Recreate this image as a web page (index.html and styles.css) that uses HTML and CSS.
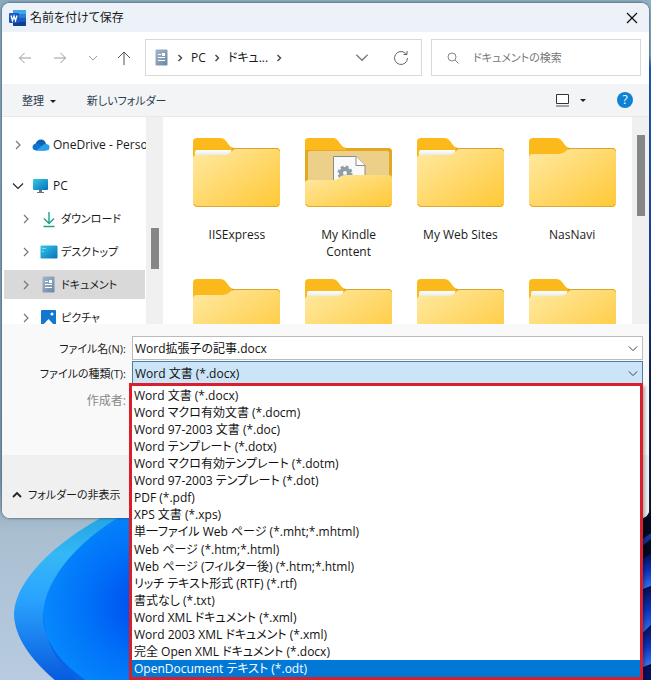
FILE: index.html
```html
<!DOCTYPE html>
<html lang="ja">

<head>
	<meta charset="utf-8">
	<meta name="viewport" content="width=device-width, initial-scale=1">
	<title>名前を付けて保存</title>
	<link rel="stylesheet" href="styles.css">
</head>

<body>
	<!-- wallpaper -->
	<svg class="wallpaper" viewBox="0 0 651 680" preserveAspectRatio="none" aria-hidden="true">
		<defs>
			<linearGradient id="sky" x1="0" y1="0" x2="0" y2="1">
				<stop offset="0" stop-color="#8aaabd" />
				<stop offset=".7" stop-color="#7e97ac" />
				<stop offset=".78" stop-color="#a9bfd0" />
				<stop offset="1" stop-color="#b8cbe0" />
			</linearGradient>
			<linearGradient id="petal" x1="0" y1="0" x2="0" y2="1">
				<stop offset="0" stop-color="#1b9bdc" />
				<stop offset=".3" stop-color="#35b8f5" />
				<stop offset=".55" stop-color="#2aa2ff" />
				<stop offset="1" stop-color="#0759dd" />
			</linearGradient>
			<radialGradient id="inner" gradientUnits="userSpaceOnUse" cx="145" cy="605" r="110">
				<stop offset="0" stop-color="#0049ee" />
				<stop offset=".5" stop-color="#0070f8" />
				<stop offset="1" stop-color="#078cfd" />
			</radialGradient>
			<linearGradient id="edge" x1="0" y1="0" x2="0" y2="1">
				<stop offset="0" stop-color="#8fb0c4" />
				<stop offset=".08" stop-color="#7fa8c6" />
				<stop offset=".1" stop-color="#1559c8" />
				<stop offset=".4" stop-color="#0b3fae" />
				<stop offset=".55" stop-color="#06174c" />
				<stop offset=".77" stop-color="#02081f" />
			</linearGradient>
			<linearGradient id="fold" x1="0" y1="0" x2="0" y2="1">
				<stop offset="0" stop-color="#030c4c" />
				<stop offset=".5" stop-color="#0a35c0" />
				<stop offset="1" stop-color="#3b7cf8" />
			</linearGradient>
		</defs>
		<rect width="651" height="680" fill="url(#sky)" />
		<path d="M140 500C88 520 48 550 28 578C18 592 14 604 14 615C15 638 31 660 57 682H140Z" fill="url(#petal)" />
		<path d="M140 506C88 530 43 576 43 616C43 640 58 662 88 682H140Z" fill="url(#inner)" />
		<path d="M43 612C43 640 58 662 88 682H78C54 660 45 640 43 612Z" fill="#0863e6" />
		<rect x="641" width="10" height="680" fill="url(#edge)" />
		<path d="M641 540L651 533V539L641 547Z" fill="#14338f" />
		<path d="M641 560L651 553V586L641 590Z" fill="url(#fold)" />
		<path d="M641 590L651 586V625L641 635Z" fill="url(#fold)" />
		<path d="M641 635L651 625V664L641 668Z" fill="url(#fold)" />
		<path d="M641 668L651 666V680H641Z" fill="#03105c" />
	</svg>

	<!-- shared icons -->
	<svg width="0" height="0" class="sprites" aria-hidden="true">
		<defs>
			<linearGradient id="front" x1="0" y1="0" x2="1" y2="1">
				<stop offset="0" stop-color="#ffe9a2" />
				<stop offset="1" stop-color="#ffc835" />
			</linearGradient>
			<linearGradient id="paper" x1="0" y1="0" x2="0" y2="1">
				<stop offset="0" stop-color="#fff" />
				<stop offset="1" stop-color="#dcdcd6" />
			</linearGradient>
			<linearGradient id="docfill" x1="0" y1="0" x2="1" y2="1">
				<stop offset="0" stop-color="#a3b7ca" />
				<stop offset="1" stop-color="#6c87a3" />
			</linearGradient>
			<linearGradient id="screen" x1="0" y1="0" x2="1" y2="1">
				<stop offset="0" stop-color="#35c9e6" />
				<stop offset="1" stop-color="#0670bd" />
			</linearGradient>
			<symbol id="doc" viewBox="0 0 14 17">
				<rect x=".5" y=".5" width="12" height="16" rx="1" fill="url(#docfill)" />
				<path d="M3 5.500h3M3 8.500h7M3 11.500h7" stroke="#fff" />
				<rect x="7" y="4" width="3" height="3" fill="#fff" />
			</symbol>
			<symbol id="right" viewBox="0 0 8 10">
				<path d="M2 1l4 4-4 4" fill="none" stroke="currentColor" stroke-width="1.200" />
			</symbol>
			<symbol id="right-small" viewBox="0 0 8 10">
				<path d="M2.500 2l3 3-3 3" fill="none" stroke="currentColor" stroke-width="1.400" />
			</symbol>
			<symbol id="down" viewBox="0 0 12 8">
				<path d="M1 1.500l5 5 5-5" fill="none" stroke="currentColor" stroke-width="1.100" />
			</symbol>
			<!-- folder with a sheet of paper inside -->
			<symbol id="folder" viewBox="0 0 87 69">
				<path d="M0 18V4Q0 0 4 0H27Q31 0 33 3L36 7Q38 10 41 10H83Q87 10 87 14V40H0Z" fill="#fbb91b" />
				<path d="M39 10H83Q87 10 87 14V20H39Z" fill="#d9a52c" />
				<path d="M2 20V14Q2 12 4 12H38V20Z" fill="url(#paper)" />
				<path d="M0 21Q0 17 4 17H32Q35 17 37 15L39 13Q40 11 43 11H83Q87 11 87 15V65Q87 69 83 69H4Q0 69 0 65Z" fill="url(#front)" />
				<path d="M1 66Q2 68.500 4 68.500H83Q85 68.500 86 66" fill="none" stroke="#dca932" />
			</symbol>
			<!-- empty folder -->
			<symbol id="folder-empty" viewBox="0 0 87 69">
				<path d="M0 22V4Q0 0 4 0H27Q31 0 33 3L36 7Q38 10 41 10H83Q87 10 87 14V40H0Z" fill="#fbb91b" />
				<path d="M39 10H83Q87 10 87 14V20H39Z" fill="#d9a52c" />
				<path d="M0 20Q0 16 4 16H30Q34 16 37 13L38 12Q40 11 43 11H83Q87 11 87 15V65Q87 69 83 69H4Q0 69 0 65Z" fill="url(#front)" />
				<path d="M1 66Q2 68.500 4 68.500H83Q85 68.500 86 66" fill="none" stroke="#dca932" />
			</symbol>
			<!-- open folder with a settings file -->
			<symbol id="folder-open" viewBox="0 0 87 69">
				<path d="M0 46V4Q0 0 4 0H27Q31 0 33 3L36 7Q38 10 41 10H83Q87 10 87 14V42H0Z" fill="#fbb91b" />
				<path d="M0 46V12Q0 10 3 10H83Q87 10 87 14V42Z" fill="#e3a822" />
				<path d="M0 12V4Q0 0 4 0H27Q31 0 33 3L36 7Q38 10 41 10V12Z" fill="#fbb91b" />
				<path d="M3 44V15Q3 13 5 13H82Q84 13 84 15V44Z" fill="#ecd08a" />
				<path d="M28.500 44V18.500H51L60 27.500V44Z" fill="#fafafa" stroke="#8c8c8c" />
				<path d="M51 18.500V27.500H60" fill="#fff" stroke="#8c8c8c" />
				<circle cx="40" cy="35" r="4" fill="none" stroke="#8f9caa" stroke-width="4" />
				<circle cx="40" cy="35" r="6" fill="none" stroke="#8f9caa" stroke-width="3" stroke-dasharray="2.700 2" />
				<path d="M0 45Q0 42 4 42H29Q32 42 34 40L36 38Q38 37 41 37H83Q87 37 87 40V65Q87 69 83 69H4Q0 69 0 65Z" fill="url(#front)" />
				<path d="M1 66Q2 68.500 4 68.500H83Q85 68.500 86 66" fill="none" stroke="#dca932" />
			</symbol>
		</defs>
	</svg>

	<main class="dialog">
		<header class="titlebar">
			<svg width="17" height="16" viewBox="0 0 17 16" aria-hidden="true">
				<rect x="4" width="13" height="16" rx="1" fill="#2b7cd3" />
				<path d="M4 1q0-1 1-1h11q1 0 1 1v3H4z" fill="#41a5ee" />
				<path d="M4 8h13v4H4z" fill="#185abd" />
				<path d="M4 12h13v3q0 1-1 1H5q-1 0-1-1z" fill="#103f91" />
				<rect y="3" width="10" height="10" rx="1" fill="#185abd" />
				<path d="M2 5.500l1.500 5L5 6l1.500 4.500 1.500-5" fill="none" stroke="#fff" stroke-width="1.300" />
			</svg>
			<h1>名前を付けて保存</h1>
			<button class="close" aria-label="閉じる">
				<svg width="12" height="12" viewBox="0 0 12 12"><path d="M1 1l10 10M11 1L1 11" stroke="#111" stroke-width="1.300" /></svg>
			</button>
		</header>

		<nav class="navbar">
			<div class="history">
				<button aria-label="戻る"><svg width="14" height="14" viewBox="0 0 14 14"><path d="M13 7H1.500M6.500 2l-5 5 5 5" /></svg></button>
				<button aria-label="進む"><svg width="14" height="14" viewBox="0 0 14 14"><path d="M1 7h11.500M7.500 2l5 5-5 5" /></svg></button>
				<button aria-label="履歴"><svg width="10" height="14" viewBox="0 0 10 14"><path d="M1 5l4 4 4-4" /></svg></button>
				<button class="up" aria-label="上へ"><svg width="16" height="16" viewBox="0 0 16 16"><path d="M8 15V2M2 8l6-6 6 6" /></svg></button>
			</div>
			<div class="address">
				<svg width="14" height="17"><use href="#doc" /></svg>
				<svg class="sep" width="8" height="10"><use href="#right-small" /></svg>
				<a href="#pc">PC</a>
				<svg class="sep" width="8" height="10"><use href="#right-small" /></svg>
				<a href="#documents">ドキュ...</a>
				<svg class="sep" width="8" height="10"><use href="#right-small" /></svg>
				<button class="more" aria-label="以前の場所"><svg width="14" height="9"><use href="#down" /></svg></button>
				<button aria-label="更新">
					<svg width="16" height="16" viewBox="0 0 16 16"><path d="M14.500 8a6.500 6.500 0 1 1-2-4.700L14 4.500M14 1v3.500h-3.500" /></svg>
				</button>
			</div>
			<label class="search">
				<svg width="12" height="12" viewBox="0 0 12 12"><circle cx="5" cy="5" r="4" /><path d="M8 8l3.500 3.500" /></svg>
				<input type="search" placeholder="ドキュメントの検索" aria-label="ドキュメントの検索">
			</label>
		</nav>

		<div class="toolbar">
			<button>整理 <span class="caret"></span></button>
			<button>新しいフォルダー</button>
			<button class="view" aria-label="表示方法">
				<svg width="14" height="13" viewBox="0 0 14 13"><path d="M.5 .5h12v9H.5z" fill="#fff" stroke="#333" /><path d="M0 12h13" stroke="#555" /></svg>
				<span class="caret"></span>
			</button>
			<button class="help" aria-label="ヘルプ">?</button>
		</div>

		<div class="browser">
			<ul class="tree">
				<li class="root">
					<svg class="arrow" width="8" height="10"><use href="#right" /></svg>
					<svg class="icon" width="18" height="18" viewBox="0 0 18 18">
						<path d="M3.500 8Q5 3.500 9 3.500Q13 3.500 14 8L9 12Z" fill="#0a62b8" />
						<path d="M4 14.500Q.5 14 .5 11Q1 7.500 4.500 7.500Q7 7.500 9 9L14 14.500Z" fill="#1273cf" />
						<path d="M4 14.500L11 9Q12.500 7.500 14.500 8Q17.500 8.500 17.500 11Q17.500 14.500 14.500 14.500Z" fill="#28a0ea" />
					</svg>
					OneDrive - Perso
				</li>
				<li class="pc">
					<svg class="arrow open" width="12" height="8"><use href="#down" /></svg>
					<svg class="icon" width="18" height="18" viewBox="0 0 18 18">
						<rect x="1" y="2" width="15" height="11" rx="1" fill="url(#screen)" />
						<path d="M7 13h3v2H7zM5 15h7v1H5z" fill="#687785" />
					</svg>
					PC
				</li>
				<li class="child">
					<svg class="arrow" width="8" height="10"><use href="#right" /></svg>
					<svg class="icon" width="18" height="18" viewBox="0 0 18 18"><path d="M9 2v11M4 8.500l5 5 5-5M3.500 16.500h11" fill="none" stroke="#1fa08b" stroke-width="1.400" /></svg>
					ダウンロード
				</li>
				<li class="child">
					<svg class="arrow" width="8" height="10"><use href="#right" /></svg>
					<svg class="icon" width="18" height="18" viewBox="0 0 18 18"><rect x=".5" y="2.500" width="17" height="13" rx="1" fill="url(#screen)" /><path d="M3 5v1M3 8v1M5 5v1" stroke="#d8f8ff" /></svg>
					デスクトップ
				</li>
				<li class="child selected">
					<svg class="arrow" width="8" height="10"><use href="#right" /></svg>
					<svg class="icon" width="18" height="17"><use href="#doc" /></svg>
					ドキュメント
				</li>
				<li class="child">
					<svg class="arrow" width="8" height="10"><use href="#right" /></svg>
					<svg class="icon" width="18" height="18" viewBox="0 0 18 18"><rect x="1" y="1" width="15" height="15" rx="1" fill="#1277d0" /><path d="M2 17l6.500-7L15 17Z" fill="#fff" /><circle cx="12" cy="5" r="1.500" fill="#fff" /></svg>
					ピクチャ
				</li>
			</ul>
			<div class="scrollbar side"><div class="thumb"></div></div>
			<div class="files">
				<figure><svg><use href="#folder" /></svg><figcaption>IISExpress</figcaption></figure>
				<figure><svg><use href="#folder-open" /></svg><figcaption>My Kindle Content</figcaption></figure>
				<figure><svg><use href="#folder" /></svg><figcaption>My Web Sites</figcaption></figure>
				<figure><svg><use href="#folder-empty" /></svg><figcaption>NasNavi</figcaption></figure>
				<figure><svg><use href="#folder-empty" /></svg></figure>
				<figure><svg><use href="#folder" /></svg></figure>
				<figure><svg><use href="#folder" /></svg></figure>
				<figure><svg><use href="#folder" /></svg></figure>
			</div>
			<div class="scrollbar main"><div class="thumb"></div></div>
		</div>

		<form class="fields">
			<label for="filename">ファイル名(N):</label>
			<div class="combo">
				<input type="text" id="filename" value="Word拡張子の記事.docx">
				<svg width="10" height="7"><use href="#down" /></svg>
			</div>
			<label for="filetype">ファイルの種類(T):</label>
			<div class="combo active">
				<select id="filetype">
					<option>Word 文書 (*.docx)</option>
				</select>
				<svg width="10" height="7"><use href="#down" /></svg>
				<ul class="menu" role="listbox" aria-label="ファイルの種類">
					<li role="option">Word 文書 (*.docx)</li>
					<li role="option">Word マクロ有効文書 (*.docm)</li>
					<li role="option">Word 97-2003 文書 (*.doc)</li>
					<li role="option">Word テンプレート (*.dotx)</li>
					<li role="option">Word マクロ有効テンプレート (*.dotm)</li>
					<li role="option">Word 97-2003 テンプレート (*.dot)</li>
					<li role="option">PDF (*.pdf)</li>
					<li role="option">XPS 文書 (*.xps)</li>
					<li role="option">単一ファイル Web ページ (*.mht;*.mhtml)</li>
					<li role="option">Web ページ (*.htm;*.html)</li>
					<li role="option">Web ページ (フィルター後) (*.htm;*.html)</li>
					<li role="option">リッチ テキスト形式 (RTF) (*.rtf)</li>
					<li role="option">書式なし (*.txt)</li>
					<li role="option">Word XML ドキュメント (*.xml)</li>
					<li role="option">Word 2003 XML ドキュメント (*.xml)</li>
					<li role="option">完全 Open XML ドキュメント (*.docx)</li>
					<li role="option" aria-selected="true">OpenDocument テキスト (*.odt)</li>
				</ul>
			</div>
			<span class="author">作成者:</span>
		</form>

		<footer class="footer">
			<button>
				<svg width="10" height="7" viewBox="0 0 10 7"><path d="M1 6l4-4 4 4" fill="none" stroke="#222" stroke-width="1.800" /></svg>
				フォルダーの非表示
			</button>
		</footer>
	</main>
</body>

</html>
```
FILE: styles.css
```css
* {
	box-sizing: border-box;
}

body {
	margin: 0;
	padding: 3px 2px 0;
	position: relative;
	min-height: 100vh;
	overflow: hidden;
	font-family: "Open Sans", "Noto Sans CJK JP", sans-serif;
	font-feature-settings: "palt";
	font-size: 12px;
	line-height: 17px;
	color: #1a1a1a;
}

button,
input,
select {
	font: inherit;
	font-feature-settings: inherit;
	color: inherit;
	background: none;
	border: 0;
	padding: 0;
	margin: 0;
	outline: 0;
}

ul {
	list-style: none;
	margin: 0;
	padding: 0;
}

.wallpaper {
	position: absolute;
	top: 0;
	left: 0;
	width: 100%;
	height: 100%;
}

.sprites {
	position: absolute;
}

.dialog {
	position: relative;
	background: #fff;
	border-radius: 8px;
	box-shadow: 0 0 2px 1px rgba(50, 70, 90, .5);
}

/* title */
.titlebar {
	display: flex;
	align-items: center;
	height: 29px;
	padding: 0 10px 0 7px;
	background: #edf2f9;
	border-radius: 8px 8px 0 0;
}

.titlebar h1 {
	flex: 1;
	margin: 0 0 0 4px;
	font-size: 12px;
	font-weight: normal;
}

.close {
	display: flex;
	padding: 1px;
}

/* navigation */
.navbar {
	display: flex;
	padding: 7px 8px 8px 16px;
	height: 52px;
}

.navbar svg {
	fill: none;
	stroke: #666;
}

.address > svg:first-child {
	stroke: none;
}

.history {
	display: flex;
	align-items: center;
	gap: 21px;
	width: 127px;
}

.history svg {
	display: block;
	stroke: #999;
}

.history .up svg {
	stroke: #555;
}

.history .up {
	margin-left: -3px;
}

.address,
.search {
	display: flex;
	align-items: center;
	border: 1px solid #d9d9d9;
}

.address {
	flex: 1 1 277px;
	padding: 0 12px 0 9px;
}

.address a {
	color: inherit;
	text-decoration: none;
}

.address .sep {
	margin: 0 7px;
	color: #444;
	stroke: none;
}

.address button {
	display: flex;
	color: #777;
}

.address .more {
	margin: 0 24px 0 auto;
}

.address .more svg {
	stroke: none;
}

.search {
	flex: 1 1 210px;
	margin-left: 9px;
	padding: 0 15px;
	gap: 14px;
}

.search svg {
	stroke: #888;
	flex: none;
}

.search input {
	width: 100%;
	min-width: 0;
	font-size: 11px;
}

.search input::placeholder {
	color: #757575;
	opacity: 1;
}

/* toolbar */
.toolbar {
	display: flex;
	align-items: center;
	gap: 31px;
	height: 33px;
	padding: 0 16px 0 20px;
	background: #f3f4f6;
	border-bottom: 1px solid #e8e8e8;
	font-size: 11px;
	color: #2d3c50;
}

.caret {
	display: inline-block;
	margin-left: 3px;
	vertical-align: middle;
	border: 3px solid transparent;
	border-top-color: #222;
	border-bottom: 0;
}

.view {
	display: flex;
	align-items: center;
	gap: 7px;
	margin-left: auto;
}

.help {
	width: 16px;
	height: 16px;
	line-height: 16px;
	border-radius: 8px;
	background: #0e83d4;
	font-size: 12px;
	color: #fff;
}

/* folder tree and files */
.browser {
	display: flex;
	height: 207px;
	overflow: hidden;
}

.tree {
	width: 144px;
	padding: 13px 1px 0 2px;
	white-space: nowrap;
}

.tree li {
	display: flex;
	align-items: center;
	height: 29px;
	margin-bottom: 4px;
	padding-left: 8px;
}

.tree .root {
	margin-bottom: 12px;
}

.tree .child {
	padding-left: 16px;
	font-size: 11px;
}

.tree .selected {
	background: #d9d9d9;
}

.arrow {
	flex: none;
	width: 12px;
	color: #777;
}

.arrow.open {
	color: #222;
}

.icon {
	flex: none;
	margin: 0 3px 0 8px;
}

.scrollbar {
	flex: none;
	width: 17px;
	background: #f0f0f0;
}

.thumb {
	width: 8px;
	margin-left: 5px;
	background: #868686;
}

.side {
	padding-top: 111px;
}

.side .thumb {
	height: 41px;
}

.main {
	padding-top: 18px;
}

.main .thumb {
	height: 81px;
}

.files {
	flex: 1;
	display: grid;
	grid-template-columns: repeat(4, 1fr);
	grid-auto-rows: 124px;
	row-gap: 17px;
	padding: 21px 4px 0 18px;
}

.files figure {
	display: flex;
	flex-direction: column;
	align-items: center;
	margin: 0;
}

.files svg {
	flex: none;
	width: 87px;
	height: 69px;
}

.files figcaption {
	width: 80px;
	margin-top: 19px;
	text-align: center;
}

/* file name and type */
.fields {
	display: grid;
	grid-template-columns: 124px 1fr;
	grid-auto-rows: 24px;
	gap: 1px 6px;
	align-items: center;
	height: 131px;
	padding: 12px 6px 0 0;
	background: #f9f9f9;
}

.fields > label,
.author {
	font-size: 11px;
	text-align: right;
	white-space: nowrap;
}

.author {
	padding-top: 4px;
	font-size: 12px;
	color: #888;
}

.combo {
	position: relative;
	display: flex;
	align-items: center;
	height: 24px;
	padding: 0 4px 0 2px;
	background: #fff;
	border: 1px solid #bbb;
	color: #333;
}

.combo input,
.combo select {
	flex: 1;
	min-width: 0;
	appearance: none;
	color: #111;
}

.combo.active {
	background: #cce4f7;
	border-color: #4a7fa0;
}

.menu {
	position: absolute;
	z-index: 1;
	top: 21px;
	left: -4px;
	right: -1px;
	display: grid;
	grid-auto-rows: 1fr;
	height: 297px;
	padding-top: 1px;
	background: #fff;
	border: 3px solid #d91f2b;
	box-shadow: 2px 3px 3px rgba(0, 0, 0, .3);
	color: #111;
	white-space: nowrap;
}

.menu li {
	padding-left: 2px;
}

.menu [aria-selected] {
	background: #0078d7;
	color: #fff;
}

.footer {
	height: 63px;
	padding: 31px 10px 0;
	background: #f0f0f0;
	border-radius: 0 0 8px 8px;
}

.footer button {
	display: flex;
	align-items: center;
	gap: 6px;
	font-size: 11px;
}
```
